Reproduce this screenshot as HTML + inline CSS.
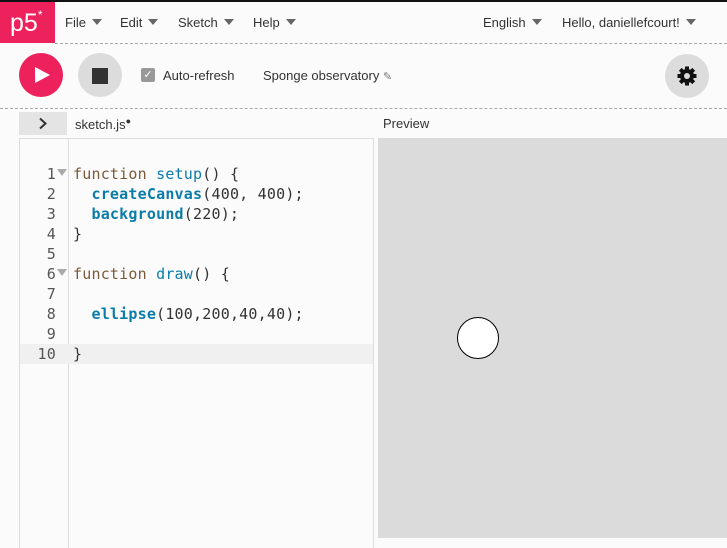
<!DOCTYPE html>
<html><head><style>
*{margin:0;padding:0;box-sizing:border-box}
body{width:727px;height:548px;overflow:hidden;background:#fbfbfb;font-family:"Liberation Sans",sans-serif;color:#333;position:relative}
.a{position:absolute}
.nav{font-size:13px;color:#333;top:15px}
.tri{display:inline-block;width:0;height:0;border-left:5px solid transparent;border-right:5px solid transparent;border-top:6px solid #666;margin-left:6px;vertical-align:2px}
.dash{left:0;width:727px;height:0;border-top:1px dashed #aaa}
.code{font-family:"DejaVu Sans Mono","Liberation Mono",monospace;font-size:15px;line-height:20px;white-space:pre;letter-spacing:0.2px}
.k{color:#7a5a3a}.f{color:#0b7ca9}.b{color:#0b7ca9;font-weight:bold}.p{color:#333}
</style></head><body>
<div class="a" style="left:0;top:0;width:727px;height:2px;background:#111"></div>
<div class="a" style="left:0;top:2px;width:55px;height:41px;background:#ed225d;color:#fff;font-size:25px;padding:6px 0 0 10px">p5<span style="font-size:12px;vertical-align:12px">*</span></div>
<div class="a nav" style="left:65px">File<span class="tri"></span></div>
<div class="a nav" style="left:120px">Edit<span class="tri"></span></div>
<div class="a nav" style="left:178px">Sketch<span class="tri"></span></div>
<div class="a nav" style="left:253px">Help<span class="tri"></span></div>
<div class="a nav" style="left:483px">English<span class="tri"></span></div>
<div class="a nav" style="left:562px">Hello, daniellefcourt!<span class="tri"></span></div>
<div class="a dash" style="top:43px;left:55px"></div>
<div class="a" style="left:19px;top:53px;width:44px;height:44px;border-radius:50%;background:#ed225d"></div>
<div class="a" style="left:35px;top:67px;width:0;height:0;border-top:8px solid transparent;border-bottom:8px solid transparent;border-left:15px solid #fff"></div>
<div class="a" style="left:78px;top:53px;width:44px;height:44px;border-radius:50%;background:#dcdcdc"></div>
<div class="a" style="left:92px;top:68px;width:16px;height:16px;background:#333"></div>
<div class="a" style="left:141px;top:68px;width:14px;height:14px;background:#999;border-radius:2px;color:#fff;font-size:11px;text-align:center;line-height:14px">✓</div>
<div class="a" style="left:163px;top:68px;font-size:13px">Auto-refresh</div>
<div class="a" style="left:263px;top:68px;font-size:13px">Sponge observatory <span style="color:#777;font-size:11px">✎</span></div>
<div class="a" style="left:665px;top:54px;width:44px;height:44px;border-radius:50%;background:#dcdcdc"></div>
<svg class="a" style="left:677px;top:66px" width="20" height="20" viewBox="0 0 20 20">
<g fill="#111"><circle cx="10" cy="10" r="7"/>
<rect x="8" y="0.5" width="4" height="19"/>
<rect x="8" y="0.5" width="4" height="19" transform="rotate(45 10 10)"/>
<rect x="8" y="0.5" width="4" height="19" transform="rotate(90 10 10)"/>
<rect x="8" y="0.5" width="4" height="19" transform="rotate(135 10 10)"/></g>
<circle cx="10" cy="10" r="3" fill="#dcdcdc"/></svg>
<div class="a dash" style="top:108px"></div>
<div class="a" style="left:19px;top:112px;width:48px;height:23px;background:#e4e4e4"></div>
<svg class="a" style="left:38px;top:117px" width="10" height="13" viewBox="0 0 10 13"><path d="M2 1.5 L7.5 6.5 L2 11.5" fill="none" stroke="#333" stroke-width="2"/></svg>
<div class="a" style="left:75px;top:116px;font-size:13px">sketch.js<span style="font-size:9px;vertical-align:5px">●</span></div>
<div class="a" style="left:383px;top:116px;font-size:13px">Preview</div>
<div class="a" style="left:19px;top:138px;width:355px;height:410px;border:1px solid #ddd;border-bottom:none;background:#fbfbfb"></div>
<div class="a" style="left:68px;top:138px;width:1px;height:410px;background:#ddd"></div>
<div class="a" style="left:20px;top:344px;width:353px;height:20px;background:#f0f0f0"></div>
<div class="a code" style="left:20px;top:164px;width:36px;text-align:right;color:#555">1
2
3
4
5
6
7
8
9
10</div>
<div class="a" style="left:57px;top:169px;border-left:5px solid transparent;border-right:5px solid transparent;border-top:7px solid #aaa"></div>
<div class="a" style="left:57px;top:269px;border-left:5px solid transparent;border-right:5px solid transparent;border-top:7px solid #aaa"></div>
<div class="a code" style="left:73px;top:164px"><span class="k">function</span> <span class="f">setup</span>() {
  <span class="b">createCanvas</span>(400, 400);
  <span class="b">background</span>(220);
}

<span class="k">function</span> <span class="f">draw</span>() {

  <span class="b">ellipse</span>(100,200,40,40);

}</div>
<div class="a" style="left:378px;top:138px;width:349px;height:400px;background:#dbdbdb"></div>
<div class="a" style="left:457px;top:317px;width:42px;height:42px;border-radius:50%;background:#fff;border:1px solid #000"></div>
</body></html>
